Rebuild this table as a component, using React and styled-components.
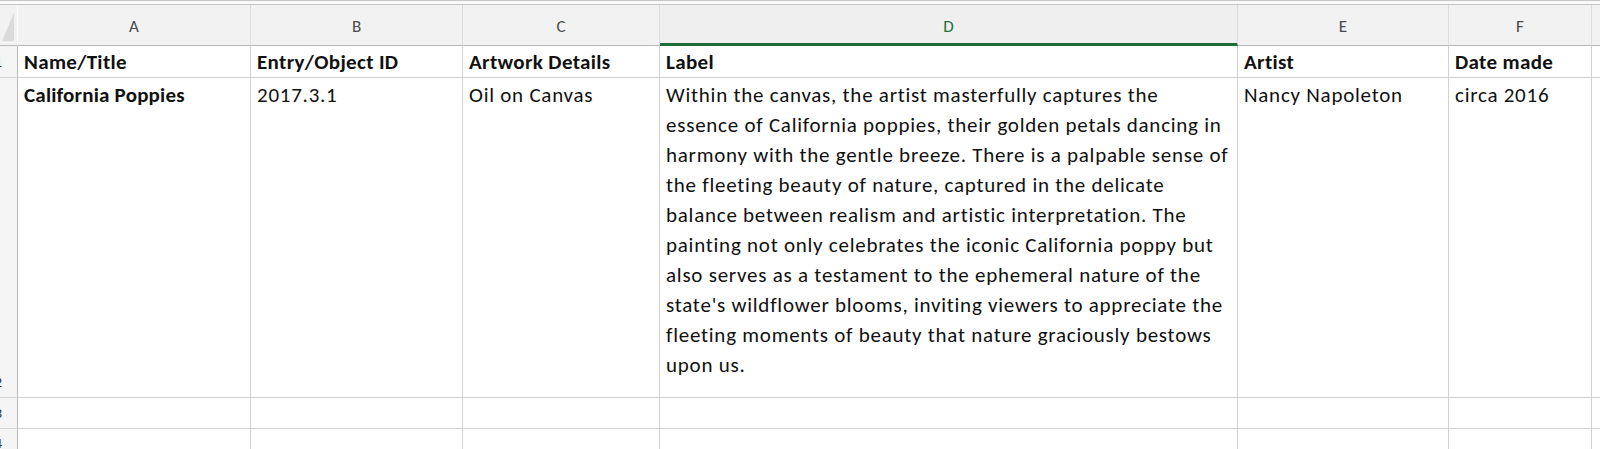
import React from 'react';
import styled, { createGlobalStyle } from 'styled-components';

const GlobalStyle = createGlobalStyle`
	html, body {
		margin: 0;
		padding: 0;
		background: #ffffff;
		overflow: hidden;
	}
	body {
		font-family: 'Carlito', Lato, 'Liberation Sans', sans-serif;
	}
`;

const Sheet = styled.div`
	width: 1600px;
	height: 449px;
	overflow: hidden;
	background: #fff;
`;

const TopRule = styled.div`
	height: 3px;
	border-top: 1px solid #c6c6c6;
	border-bottom: 1px solid #c6c6c6;
	background: #fafafa;
`;

const Grid = styled.div`
	display: grid;
	grid-template-columns: ${props => props.$template};
	grid-auto-rows: auto;
`;

const Corner = styled.div`
	height: 41px;
	box-sizing: border-box;
	background: #f2f2f2;
	border-right: 1px solid #fdfdfd;
	border-bottom: 1px solid #b9b9b9;
	display: flex;
	align-items: flex-end;
	justify-content: flex-end;
	padding: 0 3px 4px 0;
`;

const CornerTriangle = styled.div`
	width: 0;
	height: 0;
	border-left: 12px solid transparent;
	border-bottom: 28px solid #dadada;
`;

const ColHead = styled.div`
	height: 41px;
	box-sizing: border-box;
	background: ${props => (props.$selected ? '#efefef' : '#f2f2f2')};
	border-right: 1px solid #dcdcdc;
	border-bottom: ${props => (props.$selected ? '3px solid #1e6e3a' : '1px solid #b9b9b9')};
	color: ${props => (props.$selected ? '#1e6e3a' : '#4a4a4a')};
	font-size: 17px;
	display: flex;
	align-items: center;
	justify-content: center;
	padding-top: ${props => (props.$selected ? '4px' : '2px')};
`;

const RowHead = styled.div`
	height: ${props => props.$height}px;
	box-sizing: border-box;
	background: #f5f5f5;
	border-right: 1px solid #b9b9b9;
	border-bottom: 1px solid #d4d4d4;
	overflow: hidden;
	display: flex;
	align-items: flex-end;
	justify-content: flex-end;
	padding-bottom: 6px;
`;

const RowNum = styled.span`
	font-size: 15px;
	color: #333;
	margin-right: 15px;
`;

const Cell = styled.div`
	height: ${props => props.$height}px;
	box-sizing: border-box;
	border-right: 1px solid #d2d2d2;
	border-bottom: 1px solid #d2d2d2;
	padding: ${props => props.$padTop}px 6px 0;
	font-size: 21px;
	line-height: 30px;
	font-weight: ${props => (props.$bold ? 700 : 400)};
	letter-spacing: ${props => (props.$bold ? '0.35px' : '0.75px')};
	color: #111;
	white-space: nowrap;
	overflow: hidden;

	strong {
		font-weight: 700;
		letter-spacing: 0.2px;
	}
`;

const Line = styled.span`
	display: block;
`;

const columns = [
	{ letter: 'A', width: 233 },
	{ letter: 'B', width: 212 },
	{ letter: 'C', width: 197 },
	{ letter: 'D', width: 578, selected: true },
	{ letter: 'E', width: 211 },
	{ letter: 'F', width: 143 },
	{ letter: 'G', width: 60 },
];

const labelLines = [
	'Within the canvas, the artist masterfully captures the',
	'essence of California poppies, their golden petals dancing in',
	'harmony with the gentle breeze. There is a palpable sense of',
	'the fleeting beauty of nature, captured in the delicate',
	'balance between realism and artistic interpretation. The',
	'painting not only celebrates the iconic California poppy but',
	'also serves as a testament to the ephemeral nature of the',
	"state's wildflower blooms, inviting viewers to appreciate the",
	'fleeting moments of beauty that nature graciously bestows',
	'upon us.',
];

const blank = ['', '', '', '', '', '', ''];

const rows = [
	{ num: 1, height: 32, padTop: 1, bold: true, cells: ['Name/Title', 'Entry/Object ID', 'Artwork Details', 'Label', 'Artist', 'Date made', ''] },
	{
		num: 2,
		height: 320,
		padTop: 2,
		cells: [
			<strong key="t">California Poppies</strong>,
			'2017.3.1',
			'Oil on Canvas',
			labelLines.map((l, i) => <Line key={i}>{l}</Line>),
			'Nancy Napoleton',
			'circa 2016',
			'',
		],
	},
	{ num: 3, height: 31, padTop: 1, cells: blank },
	{ num: 4, height: 30, padTop: 1, cells: blank },
];

function App() {
	const template = `18px ${columns.map(c => `${c.width}px`).join(' ')}`;
	return (
		<>
			<GlobalStyle />
			<Sheet>
				<TopRule />
				<Grid $template={template}>
					<Corner>
						<CornerTriangle />
					</Corner>
					{columns.map(c => (
						<ColHead key={c.letter} $selected={c.selected}>
							{c.letter}
						</ColHead>
					))}
					{rows.map(row => (
						<React.Fragment key={row.num}>
							<RowHead $height={row.height}>
								<RowNum>{row.num}</RowNum>
							</RowHead>
							{row.cells.map((cell, i) => (
								<Cell key={i} $height={row.height} $padTop={row.padTop} $bold={row.bold}>
									{cell}
								</Cell>
							))}
						</React.Fragment>
					))}
				</Grid>
			</Sheet>
		</>
	);
}

export default App;
